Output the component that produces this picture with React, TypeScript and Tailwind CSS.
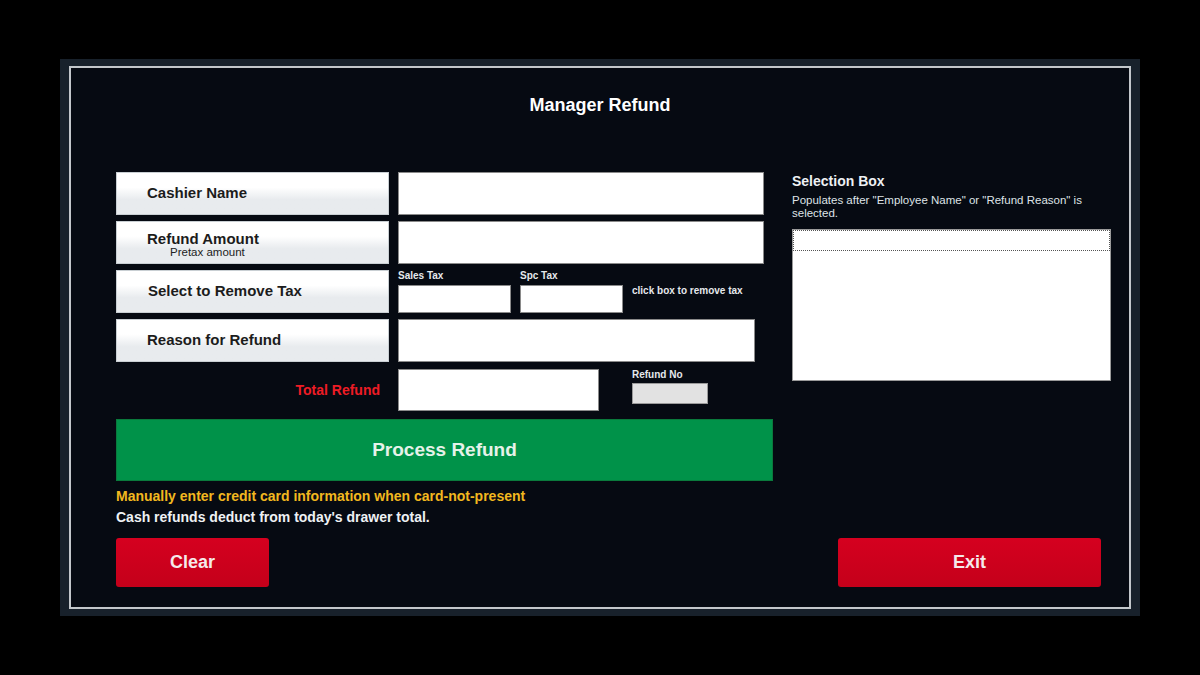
export default function App() {
  const labelBox =
    'flex h-[43px] w-[273px] flex-col justify-center border border-[#c9cfd3] bg-gradient-to-b from-white from-35% to-[#e8ebee] to-65% pb-[2px] pl-[30px] text-[15px] font-bold leading-[17px] text-[#1c1c1c]'
  const input = 'border border-[#8a8a8a] bg-white'
  const small = 'text-[10px] font-bold leading-[11px] text-[#e5e8ec]'

  return (
    <div className="flex h-[675px] w-[1200px] items-start justify-center bg-black pt-[59px] font-['Liberation_Sans',Arial,sans-serif]">
      <div className="h-[557px] w-[1080px] bg-[#18212b] px-[9px] pt-[7px]">
        <div className="flex h-[543px] w-[1062px] flex-col border-2 border-[#c3c7cb] bg-[#060a12] pl-[45px]">
          <h1 className="mt-[26px] mr-[45px] text-center text-[18px] font-bold leading-[22px] text-white">
            Manager Refund
          </h1>

          <div className="mt-[56px] flex">
            {/* left form */}
            <div className="flex w-[657px] flex-col">
              <div className="flex gap-[9px]">
                <div className={labelBox}>Cashier Name</div>
                <div className={`h-[43px] w-[366px] ${input}`} />
              </div>

              <div className="mt-[6px] flex gap-[9px]">
                <div className={labelBox}>
                  <span className="mt-[4px]">Refund Amount</span>
                  <span className="pl-[23px] text-[11.5px] leading-[11px] font-normal text-[#222]">Pretax amount</span>
                </div>
                <div className={`h-[43px] w-[366px] ${input}`} />
              </div>

              <div className="mt-[6px] flex gap-[9px]">
                <div className={`${labelBox} pl-[31px]`}>Select to Remove Tax</div>
                <div className="flex gap-[9px]">
                  <div className="flex flex-col">
                    <span className={`h-[15px] ${small}`}>Sales Tax</span>
                    <div className={`h-[28px] w-[113px] ${input}`} />
                  </div>
                  <div className="flex flex-col">
                    <span className={`h-[15px] ${small}`}>Spc Tax</span>
                    <div className={`h-[28px] w-[103px] ${input}`} />
                  </div>
                  <span className={`pt-[15px] ${small}`}>click box to remove tax</span>
                </div>
              </div>

              <div className="mt-[6px] flex gap-[9px]">
                <div className={labelBox}>Reason for Refund</div>
                <div className={`h-[43px] w-[357px] ${input}`} />
              </div>

              <div className="mt-[7px] flex">
                <div className="flex w-[273px] items-center justify-end pr-[9px] text-[14px] font-bold text-[#ee1c25]">
                  Total Refund
                </div>
                <div className={`ml-[9px] h-[42px] w-[201px] ${input}`} />
                <div className="ml-[33px] flex flex-col">
                  <span className={`h-[14px] ${small}`}>Refund No</span>
                  <div className="h-[21px] w-[76px] border border-[#9a9a9a] bg-[#e2e2e2]" />
                </div>
              </div>

              <button className="mt-[8px] h-[62px] w-[657px] border border-[#0a7a3c] bg-[#009249] text-[19px] font-bold text-[#e6f2e9]">
                Process Refund
              </button>

              <p className="mt-[7px] text-[14px] font-bold leading-[16px] text-[#f2b81f]">
                Manually enter credit card information when card-not-present
              </p>
              <p className="mt-[5px] text-[14px] font-bold leading-[16px] text-[#eef1f4]">
                Cash refunds deduct from today's drawer total.
              </p>
            </div>

            {/* right selection */}
            <div className="ml-[19px] flex flex-col pt-[1px]">
              <h2 className="text-[14px] font-bold leading-[16px] text-[#eef1f4]">Selection Box</h2>
              <p className="mt-[5px] w-[310px] text-[11.5px] leading-[13px] text-[#dfe3e7]">
                Populates after "Employee Name" or "Refund Reason" is selected.
              </p>
              <div className="mt-[9px] h-[152px] w-[319px] border border-[#9a9a9a] bg-white">
                <div className="h-[21px] border border-dotted border-[#555]" />
              </div>
            </div>
          </div>

          <div className="mt-auto mb-[20px] flex justify-between pr-[28px]">
            <button className="h-[49px] w-[153px] rounded-[3px] bg-gradient-to-b from-[#d5001f] to-[#c4001a] text-[18px] font-bold text-[#f5e9ea]">
              Clear
            </button>
            <button className="h-[49px] w-[263px] rounded-[3px] bg-gradient-to-b from-[#d5001f] to-[#c4001a] text-[18px] font-bold text-[#f5e9ea]">
              Exit
            </button>
          </div>
        </div>
      </div>
    </div>
  )
}
